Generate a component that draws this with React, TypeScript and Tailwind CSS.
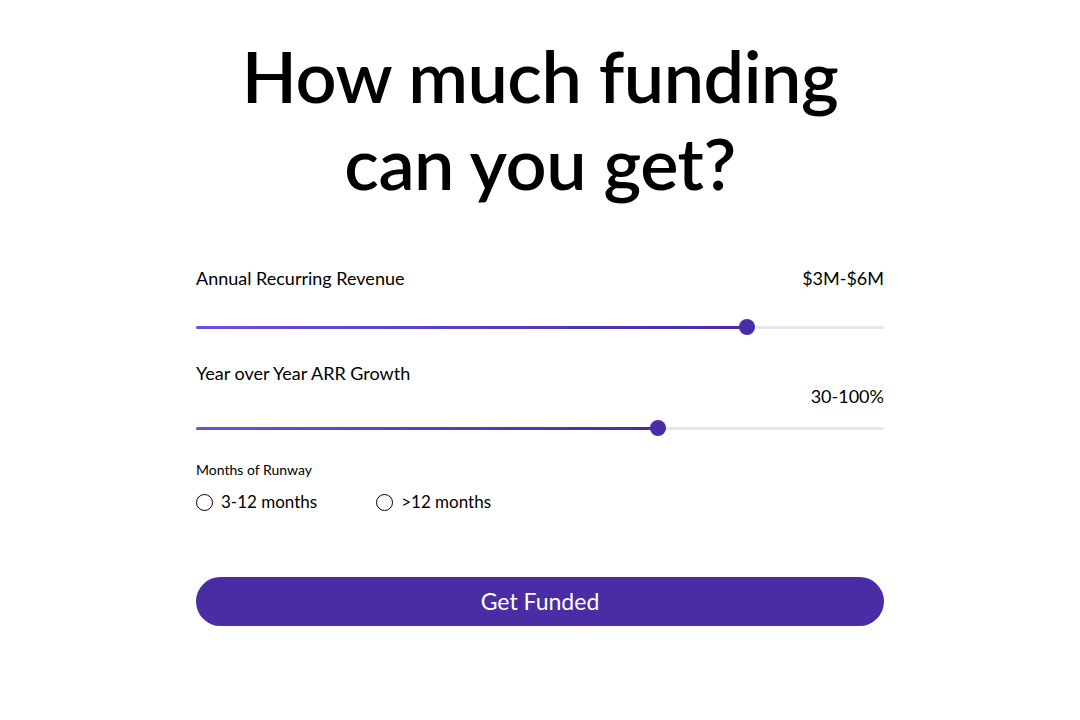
import { useState } from 'react';

const font = { fontFamily: '"Lato", "Noto Sans", sans-serif' };

function Slider({ value }: { value: number }) {
  return (
    <div className="relative h-4 flex items-center">
      <div className="w-full h-[3px] rounded-full bg-[#e7e7ea]" />
      <div
        className="absolute left-0 h-[3px] rounded-full bg-gradient-to-r from-[#6d4fe0] to-[#4a2ba3]"
        style={{ width: `${value}%` }}
      />
      <div
        className="absolute w-4 h-4 -ml-2 rounded-full bg-[#4a2ca6]"
        style={{ left: `${value}%` }}
      />
    </div>
  );
}

export default function App() {
  const [runway, setRunway] = useState<string | null>(null);

  return (
    <div className="w-full min-h-[720px] bg-white text-black" style={font}>
      <div className="w-[688px] mx-auto pt-[32px]">
        <h1 className="text-center text-[72px] leading-[87px] font-semibold tracking-[-0.5px]">
          How much funding
          <br />
          can you get?
        </h1>

        <div className="mt-[60px]">
          <div className="flex justify-between items-center text-[18px] leading-6">
            <span>Annual Recurring Revenue</span>
            <span>$3M-$6M</span>
          </div>
          <div className="mt-[29px]">
            <Slider value={80.1} />
          </div>
        </div>

        <div className="mt-[26px]">
          <div className="text-[18px] leading-6">Year over Year ARR Growth</div>
          <div className="text-[18px] leading-6 text-right -mt-[1px]">30-100%</div>
          <div className="mt-[12px]">
            <Slider value={67.2} />
          </div>
        </div>

        <div className="mt-[24px] text-[14px] leading-5">Months of Runway</div>
        <div className="mt-[10px] flex items-center gap-[59px] text-[17px] leading-6">
          {['3-12 months', '>12 months'].map((opt) => (
            <label key={opt} className="flex items-center gap-2 cursor-pointer" onClick={() => setRunway(opt)}>
              <span className="w-[17px] h-[17px] rounded-full border border-black flex items-center justify-center">
                {runway === opt && <span className="w-[9px] h-[9px] rounded-full bg-[#4a2ca6]" />}
              </span>
              <span>{opt}</span>
            </label>
          ))}
        </div>

        <button className="mt-[63px] w-full h-[49px] rounded-full bg-[#4a2ca4] text-white text-[23px]">
          Get Funded
        </button>
      </div>
    </div>
  );
}
